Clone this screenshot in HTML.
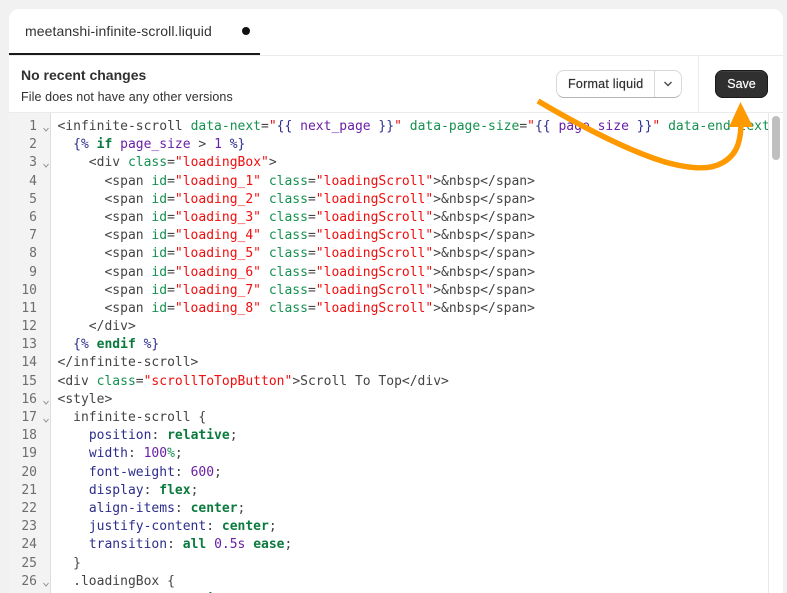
<!DOCTYPE html>
<html><head><meta charset="utf-8">
<style>
html,body{margin:0;padding:0;background:#f1f1f1;width:787px;height:593px;overflow:hidden}
body{position:relative;font-family:"Liberation Sans",sans-serif;color:#303030}
.card{position:absolute;left:9px;top:9px;width:774px;height:584px;background:#fff;border-radius:10px 10px 0 0;overflow:hidden}
.a{position:absolute;white-space:nowrap}
#gut{position:absolute;left:9px;top:113px;width:41px;height:480px;background:#f3f3f3;border-right:1px solid #ddd}
#code{position:absolute;left:57.5px;top:118px;width:710.5px;height:475px;overflow:hidden;font:13px/18.2px "DejaVu Sans Mono",monospace;color:#444}
#code div{height:18.2px;white-space:pre}
#nums{position:absolute;left:9px;top:118px;width:28px;height:475px;overflow:hidden;text-align:right;font:13px/18.2px "DejaVu Sans Mono",monospace;color:#6e6e6e}
#nums div{height:18.2px}
.g{color:#159050}.r{color:#f00d0d}.p{color:#6a1fa8}.i{color:#2d2d8e}.b{color:#0b7a3e;font-weight:bold}
.f{position:absolute;left:43px;width:6px;height:5px}
</style></head><body>
<div class="card"></div>
<div class="a" style="left:25px;top:23px;font-size:14px;line-height:16px;color:#333;letter-spacing:.1px">meetanshi-infinite-scroll.liquid</div>
<div class="a" style="left:242px;top:27px;width:8px;height:8px;border-radius:50%;background:#111"></div>
<div class="a" style="left:9px;top:55px;width:774px;height:1px;background:#ebebeb"></div>
<div class="a" style="left:9px;top:53px;width:251px;height:2px;background:#1a1a1a"></div>
<div class="a" style="left:21px;top:67px;font-size:14px;line-height:17px;font-weight:bold;color:#303030">No recent changes</div>
<div class="a" style="left:21px;top:88.6px;font-size:12.5px;line-height:16px;color:#303030;letter-spacing:.11px">File does not have any other versions</div>
<div class="a" style="left:698px;top:56px;width:1px;height:56px;background:#ebebeb"></div>
<div class="a" style="left:9px;top:112px;width:774px;height:1px;background:#ebebeb"></div>
<div class="a" style="left:556px;top:70px;width:124px;height:26px;border:1px solid #d8d8d8;border-bottom-color:#b5b5b5;border-radius:8px;background:#fff"></div>
<div class="a" style="left:568px;top:76px;font-size:12.5px;line-height:16px;color:#303030;-webkit-text-stroke:.2px #303030;letter-spacing:.25px">Format liquid</div>
<div class="a" style="left:654px;top:71px;width:1px;height:26px;background:#d8d8d8"></div>
<svg class="a" style="left:662px;top:80px" width="12" height="8" viewBox="0 0 12 8"><path d="M2.5 2l3.5 3.5L9.5 2" fill="none" stroke="#4a4a4a" stroke-width="1.4"/></svg>
<div class="a" style="left:715px;top:70px;width:53px;height:28px;border-radius:8px;background:#303030;box-shadow:inset 0 0 0 1px #1a1a1a,inset 0 2px 0 #3f3f3f;text-align:center;font-size:12.5px;line-height:28px;color:#fff;-webkit-text-stroke:.15px #fff">Save</div>
<div id="gut"></div>
<div class="a" style="left:768px;top:113px;width:15px;height:480px;background:#fff;border-left:1px solid #e8e8e8;box-sizing:border-box"></div>
<div class="a" style="left:772px;top:116px;width:8px;height:44px;border-radius:4px;background:#bfbfbf"></div>
<div id="nums"><div>1</div><div>2</div><div>3</div><div>4</div><div>5</div><div>6</div><div>7</div><div>8</div><div>9</div><div>10</div><div>11</div><div>12</div><div>13</div><div>14</div><div>15</div><div>16</div><div>17</div><div>18</div><div>19</div><div>20</div><div>21</div><div>22</div><div>23</div><div>24</div><div>25</div><div>26</div><div>27</div></div>
<svg class="f" style="top:127px" viewBox="0 0 6 5"><path d="M.5 1l2.5 3 2.5-3" fill="none" stroke="#888" stroke-width=".9"/></svg>
<svg class="f" style="top:163px" viewBox="0 0 6 5"><path d="M.5 1l2.5 3 2.5-3" fill="none" stroke="#888" stroke-width=".9"/></svg>
<svg class="f" style="top:400px" viewBox="0 0 6 5"><path d="M.5 1l2.5 3 2.5-3" fill="none" stroke="#888" stroke-width=".9"/></svg>
<svg class="f" style="top:418px" viewBox="0 0 6 5"><path d="M.5 1l2.5 3 2.5-3" fill="none" stroke="#888" stroke-width=".9"/></svg>
<svg class="f" style="top:582px" viewBox="0 0 6 5"><path d="M.5 1l2.5 3 2.5-3" fill="none" stroke="#888" stroke-width=".9"/></svg>
<div id="code"><div>&lt;infinite-scroll <span class="g">data-next</span>=<span class="r">"</span><span class="i">{{ </span><span class="p">next_page</span><span class="i"> }}</span><span class="r">"</span> <span class="g">data-page-size</span>=<span class="r">"</span><span class="i">{{ </span><span class="p">page_size</span><span class="i"> }}</span><span class="r">"</span> <span class="g">data-end-text</span>=<span class="r">"</span></div>
<div>  <span class="i">{%</span> <span class="b">if</span> <span class="p">page_size</span> &gt; <span class="p">1</span> <span class="i">%}</span></div>
<div>    &lt;div <span class="g">class</span>=<span class="r">"loadingBox"</span>&gt;</div>
<div>      &lt;span <span class="g">id</span>=<span class="r">"loading_1"</span> <span class="g">class</span>=<span class="r">"loadingScroll"</span>&gt;&amp;nbsp&lt;/span&gt;</div>
<div>      &lt;span <span class="g">id</span>=<span class="r">"loading_2"</span> <span class="g">class</span>=<span class="r">"loadingScroll"</span>&gt;&amp;nbsp&lt;/span&gt;</div>
<div>      &lt;span <span class="g">id</span>=<span class="r">"loading_3"</span> <span class="g">class</span>=<span class="r">"loadingScroll"</span>&gt;&amp;nbsp&lt;/span&gt;</div>
<div>      &lt;span <span class="g">id</span>=<span class="r">"loading_4"</span> <span class="g">class</span>=<span class="r">"loadingScroll"</span>&gt;&amp;nbsp&lt;/span&gt;</div>
<div>      &lt;span <span class="g">id</span>=<span class="r">"loading_5"</span> <span class="g">class</span>=<span class="r">"loadingScroll"</span>&gt;&amp;nbsp&lt;/span&gt;</div>
<div>      &lt;span <span class="g">id</span>=<span class="r">"loading_6"</span> <span class="g">class</span>=<span class="r">"loadingScroll"</span>&gt;&amp;nbsp&lt;/span&gt;</div>
<div>      &lt;span <span class="g">id</span>=<span class="r">"loading_7"</span> <span class="g">class</span>=<span class="r">"loadingScroll"</span>&gt;&amp;nbsp&lt;/span&gt;</div>
<div>      &lt;span <span class="g">id</span>=<span class="r">"loading_8"</span> <span class="g">class</span>=<span class="r">"loadingScroll"</span>&gt;&amp;nbsp&lt;/span&gt;</div>
<div>    &lt;/div&gt;</div>
<div>  <span class="i">{%</span> <span class="b">endif</span> <span class="i">%}</span></div>
<div>&lt;/infinite-scroll&gt;</div>
<div>&lt;div <span class="g">class</span>=<span class="r">"scrollToTopButton"</span>&gt;Scroll To Top&lt;/div&gt;</div>
<div>&lt;style&gt;</div>
<div>  infinite-scroll {</div>
<div>    <span class="i">position</span>: <span class="b">relative</span>;</div>
<div>    <span class="i">width</span>: <span class="p">100</span><span class="g">%</span>;</div>
<div>    <span class="i">font-weight</span>: <span class="p">600</span>;</div>
<div>    <span class="i">display</span>: <span class="b">flex</span>;</div>
<div>    <span class="i">align-items</span>: <span class="b">center</span>;</div>
<div>    <span class="i">justify-content</span>: <span class="b">center</span>;</div>
<div>    <span class="i">transition</span>: <span class="b">all</span> <span class="p">0.5s</span> <span class="b">ease</span>;</div>
<div>  }</div>
<div>  .loadingBox {</div>
<div>    <span class="i">position</span>: <span class="b">relative</span>;</div></div>
<svg class="a" style="left:0;top:0" width="787" height="593" viewBox="0 0 787 593">
<path d="M538 101C570 120 625 150 665 162C690 169 710 170 722 163C735 156 741 145 741 122" fill="none" stroke="#ff9900" stroke-width="5.5"/>
<path d="M740.5 102L729 127L753 127Z" fill="#ff9900"/>
</svg>
</body></html>
